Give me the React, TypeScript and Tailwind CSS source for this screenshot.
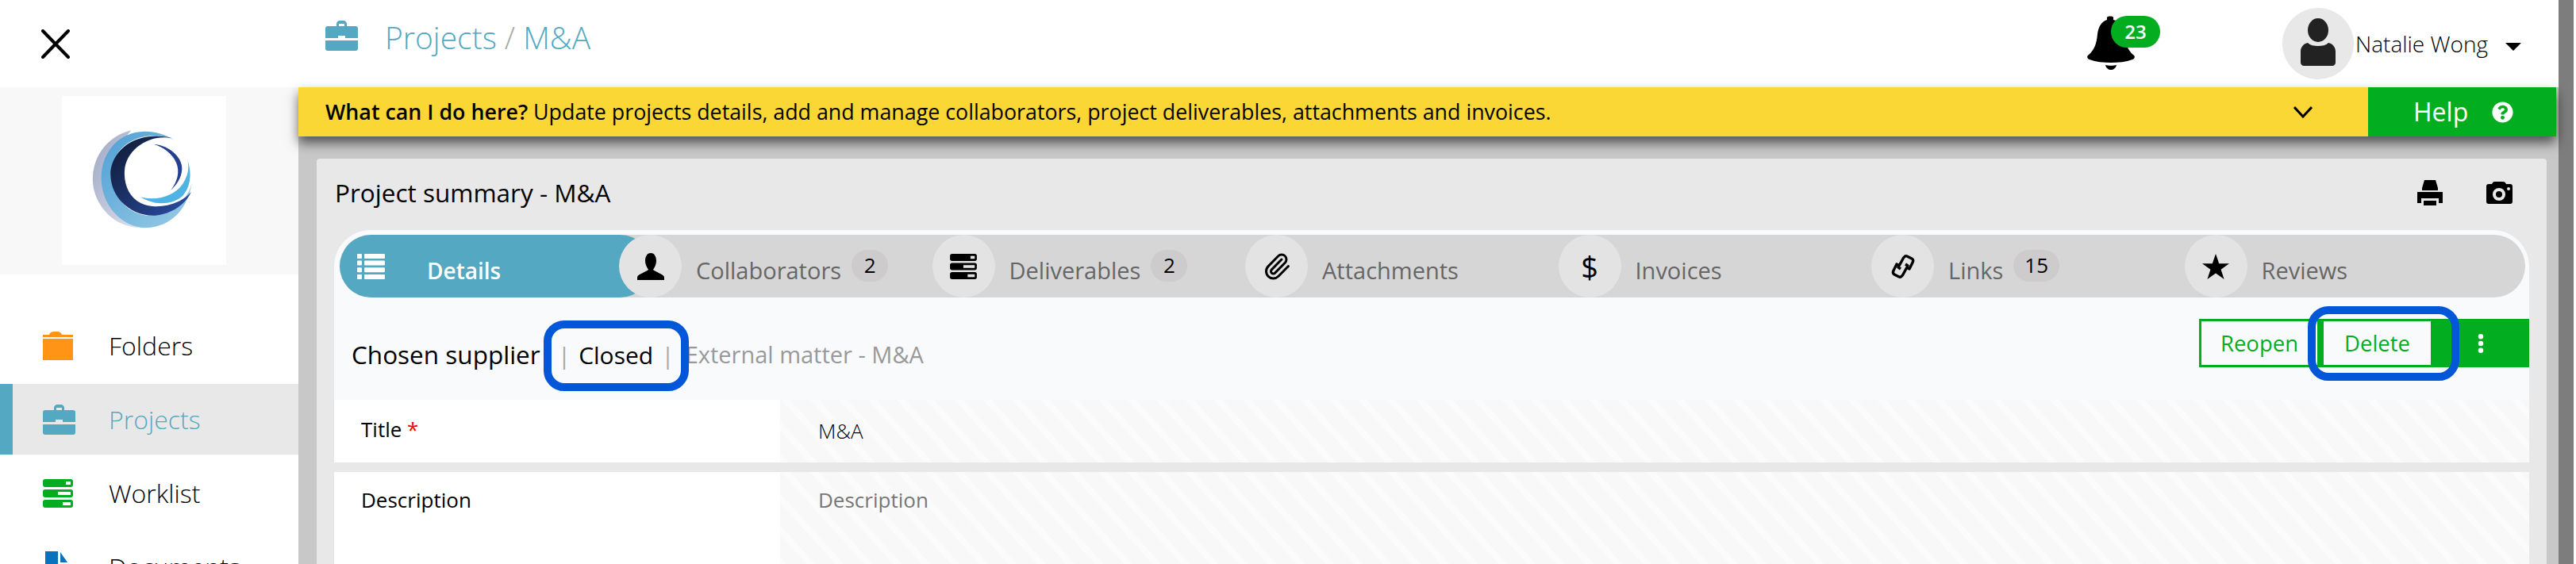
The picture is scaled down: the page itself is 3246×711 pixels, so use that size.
import { FaQuestionCircle } from "react-icons/fa";
import { Paperclip } from "lucide-react";
import type { ReactNode } from "react";

function BriefcaseIcon({ className }: { className?: string }) {
  return (
    <svg viewBox="0 0 41 38" className={className} fill="currentColor">
      <path fillRule="evenodd" d="M14 7V4c0-2 2-4 4-4h5c2 0 4 2 4 4v3h11c2 0 3 1 3 3v12H25v-3h-9v3H0V10c0-2 1-3 3-3zm3-3v3h7V4z" />
      <path d="M0 25h41v10c0 2-1 3-3 3H3c-2 0-3-1-3-3z" />
    </svg>
  );
}

function UserIcon({ className }: { className?: string }) {
  return (
    <svg viewBox="0 0 44 64" className={className} fill="currentColor">
      <ellipse cx="22" cy="15" rx="13" ry="15" />
      <path d="M4 60c-2 0-4-2-4-4V42c0-6 4-10 9-11 3 3 8 4 13 4s10-1 13-4c5 1 9 5 9 11v14c0 2-2 4-4 4z" />
    </svg>
  );
}

function ProfileIcon() {
  return (
    <svg viewBox="0 0 34 34" className="h-[34px] w-[34px]" fill="currentColor">
      <path d="M17 0c5 0 7 5 7 10 0 4-2 8-4 11 3 3 12 5 14 9v4H0v-4c2-4 11-6 14-9-2-3-4-7-4-11C10 5 12 0 17 0z" />
    </svg>
  );
}

function ServerIcon({ className, slot = "white" }: { className?: string; slot?: string }) {
  return (
    <svg viewBox="0 0 38 36" className={className}>
      <rect width="38" height="10" y="0" rx="3" fill="currentColor" />
      <rect width="38" height="10" y="13" rx="3" fill="currentColor" />
      <rect width="38" height="10" y="26" rx="3" fill="currentColor" />
      <rect x="29" y="3" width="6" height="4" fill={slot} />
      <rect x="19" y="16" width="16" height="4" fill={slot} />
      <rect x="25" y="29" width="10" height="4" fill={slot} />
    </svg>
  );
}

function FolderIcon() {
  return (
    <svg viewBox="0 0 38 36" className="h-[36px] w-[38px]" fill="#ff9416">
      <path d="M0 4h8c1-3 3-4 6-4h4c3 0 5 1 6 4h14v3H0z" />
      <rect y="9" width="38" height="27" />
    </svg>
  );
}

function DocumentIcon() {
  return (
    <svg viewBox="0 0 28 40" className="ml-[3px] h-[40px] w-[28px]" fill="#0a72bd">
      <path d="M0 0h16v18h12v22H0z" />
      <path d="M19 1l9 13h-9z" />
    </svg>
  );
}

function ListIcon() {
  return (
    <svg viewBox="0 0 35 32" className="h-[32px] w-[35px]" fill="white">
      <rect y="0" width="6" height="6" rx="1" />
      <rect x="9" y="0" width="26" height="6" rx="1" />
      <rect y="8.6" width="6" height="6" rx="1" />
      <rect x="9" y="8.6" width="26" height="6" rx="1" />
      <rect y="17.3" width="6" height="6" rx="1" />
      <rect x="9" y="17.3" width="26" height="6" rx="1" />
      <rect y="26" width="6" height="6" rx="1" />
      <rect x="9" y="26" width="26" height="6" rx="1" />
    </svg>
  );
}

function PrintIcon() {
  return (
    <svg viewBox="0 0 32 32" className="ml-auto h-[32px] w-[32px]" fill="black">
      <path d="M9 0h14l3 10v3H6v-3z" />
      <path fillRule="evenodd" d="M0 15h32v14h-5v-6H5v6H0z" />
      <path d="M8 26h16v6H8z" />
    </svg>
  );
}

function CameraIcon() {
  return (
    <svg viewBox="0 0 33 28" className="ml-[55px] mr-[21px] h-[28px] w-[33px]" fill="black">
      <path
        fillRule="evenodd"
        d="M10 0h11c2 0 3 1 4 3h5c2 0 3 1 3 3v19c0 2-1 3-3 3H3c-2 0-3-1-3-3V6c0-2 1-3 3-3h4c1-2 2-3 3-3zm6 8a8 8 0 1 0 0 16 8 8 0 0 0 0-16zm0 4a4 4 0 1 1 0 8 4 4 0 0 1 0-8zm12-5a2 2 0 1 0 0 4 2 2 0 0 0 0-4z"
      />
    </svg>
  );
}

function ChainIcon() {
  return (
    <svg viewBox="0 0 32 36" className="h-[36px] w-[32px]" fill="none" stroke="black" strokeWidth="3.4" strokeLinejoin="round">
      <path d="M13 21l-3-2 6-11c1-2 3-4 5-3l6 3c2 1 2 3 1 5l-4 8-4-2" />
      <path d="M19 15l3 2-6 11c-1 2-3 4-5 3l-6-3c-2-1-2-3-1-5l4-8 4 2" />
    </svg>
  );
}

function BellIcon() {
  return (
    <svg viewBox="0 0 60 68" className="h-[68px] w-[60px]" fill="black">
      <path d="M25 2c0-2 8-2 8 0v3c9 2 13 9 14 18 1 12 4 20 11 26 3 2 2 5-1 6-8 3-18 4-27 4S11 58 3 55c-3-1-4-4-1-6 7-6 10-14 11-26 1-9 5-16 12-18z" />
      <path d="M23 62c4 1 10 1 14 0-1 4-4 6-7 6s-6-2-7-6z" />
    </svg>
  );
}

function CompanyLogo() {
  return (
    <svg viewBox="0 0 480 480" className="h-[160px] w-[160px]">
      <defs>
        <linearGradient id="logo-grey" x1="0" y1="0" x2="1" y2="1">
          <stop offset="0" stopColor="#9da6c4" />
          <stop offset="1" stopColor="#dfe2ec" />
        </linearGradient>
        <linearGradient id="logo-light" x1="0" y1="0" x2="1" y2="1">
          <stop offset="0" stopColor="#4f9fd4" />
          <stop offset="1" stopColor="#9acde6" />
        </linearGradient>
        <linearGradient id="logo-dark" x1="0" y1="0" x2="1" y2="1">
          <stop offset="0" stopColor="#0e1830" />
          <stop offset="1" stopColor="#2b4ea6" />
        </linearGradient>
      </defs>
      <path d="M190 58A187 187 0 0 0 220 427C130 380 60 210 190 58z" fill="url(#logo-grey)" />
      <path d="M352 94C250 30 110 60 80 200c-20 120 60 220 160 227 90-2 160-57 180-172-20 85-100 125-170 125C150 370 90 260 130 160c40-80 150-100 222-66z" fill="url(#logo-light)" />
      <path d="M345 88C250 60 130 100 112 210c-7 110 88 175 168 170 60-5 115-40 137-90-32 40-97 60-147 55-70-5-110-65-105-135 5-80 95-140 180-122z" fill="url(#logo-dark)" />
      <path d="M275 110c65 5 110 55 107 95-2 35-22 60-42 80 25-35 35-70 20-105-15-35-50-60-85-70z" fill="#24408f" />
      <path d="M225 310c55 15 125 0 160-50 20-30 25-60 18-90 17 50 12 100-18 135-45 40-115 35-160 5z" fill="#4fb3e4" />
    </svg>
  );
}

type Tab = { label: string; icon: ReactNode; count?: string };

const tabs: Tab[] = [
  { label: "Collaborators", icon: <ProfileIcon />, count: "2" },
  { label: "Deliverables", icon: <ServerIcon className="h-[32px] w-[34px] text-black" slot="#e3e3e3" />, count: "2" },
  { label: "Attachments", icon: <Paperclip className="h-[36px] w-[36px]" strokeWidth={2} /> },
  { label: "Invoices", icon: <span className="text-[38px] font-medium leading-none">$</span> },
  { label: "Links", icon: <ChainIcon />, count: "15" },
  {
    label: "Reviews",
    icon: (
      <svg viewBox="0 0 34 32" className="h-[32px] w-[34px]" fill="black">
        <path d="M17 0l4.2 12.2H34l-10.4 7.6L27.6 32 17 24.4 6.4 32l4-12.2L0 12.2h12.8z" />
      </svg>
    ),
  },
];

const navItems = [
  { label: "Folders", icon: <FolderIcon /> },
  { label: "Projects", icon: <BriefcaseIcon className="h-[38px] w-[41px] text-[#55a8c1]" />, active: true },
  { label: "Worklist", icon: <ServerIcon className="h-[36px] w-[38px] text-[#02ae1f]" /> },
  { label: "Documents", icon: <DocumentIcon /> },
];

const hatch =
  "bg-[#f8f8f8] bg-[repeating-linear-gradient(48deg,#fbfbfb_0px,#fbfbfb_8px,#f8f8f8_8px,#f8f8f8_27px)]";

export default function App() {
  return (
    <div className="flex h-[711px] w-[3246px] overflow-hidden bg-white font-['Open_Sans',sans-serif] text-black">
      <div className="flex w-[3224px] flex-col">
        <header className="flex h-[110px] items-center">
          <div className="flex w-[410px] pl-[52px]">
            <svg viewBox="0 0 36 37" className="h-[37px] w-[36px]" fill="none" stroke="black" strokeWidth="4" strokeLinecap="round">
              <path d="M2 2l32 33M34 2L2 35" />
            </svg>
          </div>
          <BriefcaseIcon className="mt-[-20px] h-[38px] w-[41px] text-[#55a8c1]" />
          <div className="ml-[34px] mt-[-16px] flex items-center gap-[10px] text-[39px] font-light text-[#55a8c1]">
            <span>Projects</span>
            <span className="text-[#a9a9a9]">/</span>
            <span>M&amp;A</span>
          </div>
          <div className="relative ml-auto mt-[-2px] h-[68px] w-[60px]">
            <BellIcon />
            <span className="absolute left-[30px] top-0 flex h-[40px] w-[62px] items-center justify-center rounded-full bg-[#02ae1f] text-[24px] font-semibold text-white">
              23
            </span>
          </div>
          <div className="ml-[186px] flex h-[90px] w-[90px] items-center justify-center rounded-full bg-[#e8e8e8]">
            <UserIcon className="h-[64px] w-[58px] text-[#222]" />
          </div>
          <span className="ml-[2px] text-[28px] font-light">Natalie Wong</span>
          <div className="ml-[22px] mr-[47px] mt-[8px] h-0 w-0 border-x-[10px] border-t-[10px] border-x-transparent border-t-black" />
        </header>
        <div className="flex min-h-0 flex-1">
          <aside className="w-[376px] shrink-0">
            <div className="flex h-[236px] justify-start bg-[#f8f8f8] pl-[78px] pt-[11px]">
              <div className="flex h-[213px] w-[207px] items-center justify-center bg-white pb-[6px]">
                <CompanyLogo />
              </div>
            </div>
            <nav className="flex flex-col gap-[4px] pt-[45px]">
              {navItems.map((item) => (
                <div
                  key={item.label}
                  className={`flex h-[89px] shrink-0 items-center pl-[54px] text-[32px] font-light ${
                    item.active ? "border-l-[16px] border-[#55a8c1] bg-[#e8e8e8] !pl-[38px] text-[#55a8c1]" : ""
                  }`}
                >
                  <span className="w-[83px]">{item.icon}</span>
                  <span>{item.label}</span>
                </div>
              ))}
            </nav>
          </aside>
          <main className="min-w-0 flex-1 bg-[#c8c8c8]">
            <div className="relative z-10 mr-[3px] flex h-[62px] items-center bg-[#fbd736] pl-[34px] text-[26.8px] shadow-[0_8px_14px_rgba(0,0,0,0.6)]">
              <span>
                <span className="font-semibold">What can I do here?</span> Update projects details, add and manage collaborators, project deliverables, attachments and invoices.
              </span>
              <svg viewBox="0 0 24 15" className="ml-auto mr-[70px] h-[15px] w-[24px]" fill="none" stroke="black" strokeWidth="3">
                <path d="M1 1l11 12L23 1" />
              </svg>
              <div className="flex h-full w-[237px] items-center bg-[#02ae1f] pl-[57px] text-[32px] font-medium text-white">
                <span>Help</span>
                <FaQuestionCircle className="ml-[30px] h-[27px] w-[27px]" />
              </div>
            </div>
            <section className="ml-[23px] mr-[15px] mt-[28px] h-[600px] rounded-t-[4px] bg-[#e8e8e8] px-[22px]">
              <div className="flex h-[90px] items-center pb-[4px] pl-px text-[31.5px] font-medium">
                <span>Project summary - M&amp;A</span>
                <PrintIcon />
                <CameraIcon />
              </div>
              <div className="rounded-t-[46px] bg-[#f9fafc] pl-[7px] pr-[5px] pt-[6px]">
                <div className="flex h-[79px] rounded-full bg-[#d6d6d6]">
                  <div className="flex w-[393px] shrink-0 items-center rounded-full bg-[#55a8c1] pl-[22px] text-[28px] font-semibold text-white">
                    <ListIcon />
                    <span className="ml-[53px] mt-[10px]">Details</span>
                  </div>
                  {tabs.map((tab, i) => (
                    <div key={tab.label} className={`flex w-[394.5px] shrink-0 items-center ${i === 0 ? "-ml-[41px]" : ""}`}>
                      <div className="z-10 flex h-[79px] w-[79px] shrink-0 items-center justify-center rounded-full bg-[#e3e3e3] text-black">
                        {tab.icon}
                      </div>
                      <span className="ml-[18px] mt-[10px] text-[29px] font-medium text-[#666]">{tab.label}</span>
                      {tab.count && (
                        <span className="ml-[13px] mt-[-2px] flex h-[40px] min-w-[46px] items-center justify-center rounded-full bg-[#cdcbcb] px-[14px] text-[26px] text-black">
                          {tab.count}
                        </span>
                      )}
                    </div>
                  ))}
                </div>
              </div>
              <div className="relative flex h-[129px] items-center bg-[#f9fafc] pl-[22px]">
                <div className="mt-[15px] flex items-center">
                  <span className="text-[31.5px] font-medium">Chosen supplier</span>
                  <span className="ml-[22px] text-[30px] text-[#a9a9a9]">|</span>
                  <span className="ml-[10px] text-[30px] font-medium">Closed</span>
                  <span className="ml-[10px] text-[30px] text-[#a9a9a9]">|</span>
                  <span className="ml-[14px] text-[29px] font-medium text-[#999]">External matter - M&amp;A</span>
                </div>
                <div className="absolute left-[264px] top-[29px] h-[89px] w-[183px] rounded-[26px] border-[10px] border-[#0257d8]" />
                <div className="ml-auto mt-[-14px] flex h-[61px] items-stretch text-[27.5px] font-medium text-[#02ae1f]">
                  <div className="flex w-[152px] items-center justify-center border-[3px] border-[#02ae1f]">Reopen</div>
                  <div className="flex w-[143px] items-center justify-center border-[3px] border-l-[5px] border-[#02ae1f]">Delete</div>
                  <div className="flex w-[121px] items-center justify-center bg-[#02ae1f] pr-[2px]">
                    <svg viewBox="0 0 8 30" className="h-[24px] w-[8px]" fill="white">
                      <circle cx="4" cy="4" r="4" />
                      <circle cx="4" cy="15" r="4" />
                      <circle cx="4" cy="26" r="4" />
                    </svg>
                  </div>
                </div>
                <div className="absolute left-[2487px] top-[11px] h-[94px] w-[191px] rounded-[26px] border-[10px] border-[#0257d8]" />
              </div>
              <div className="flex h-[79px] bg-white text-[26px]">
                <div className="w-[562px] pl-[34px] pt-[18px] font-medium">
                  Title <span className="text-[#f00]">*</span>
                </div>
                <div className={`flex-1 pl-[48px] pt-[20px] font-light ${hatch}`}>M&amp;A</div>
              </div>
              <div className="mt-[12px] flex h-[200px] bg-white text-[26px]">
                <div className="w-[562px] pl-[34px] pt-[16px] font-medium">Description</div>
                <div className={`flex-1 pl-[48px] pt-[16px] text-[#777] ${hatch}`}>Description</div>
              </div>
            </section>
          </main>
        </div>
      </div>
      <div className="w-[19px] bg-[#7d7d7d]" />
    </div>
  );
}
